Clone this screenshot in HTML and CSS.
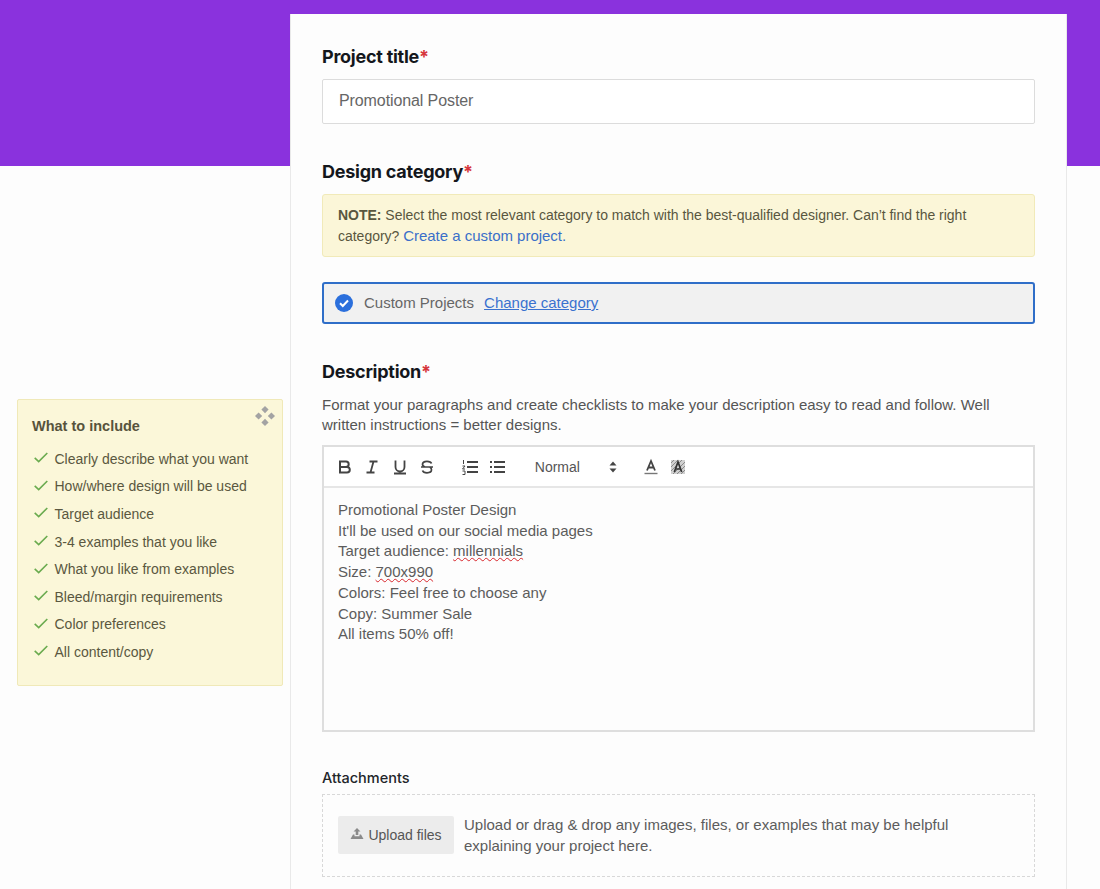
FILE: index.html
```html
<!DOCTYPE html>
<html lang="en">
<head>
<meta charset="utf-8">
<title>Project brief</title>
<link rel="stylesheet" href="styles.css">
</head>
<body>
<div class="page">
  <aside class="tips">
    <svg class="move" width="22" height="22" viewBox="0 0 22 22"><g fill="#a3a3a3"><path d="M11 1l3.6 3.6L11 8.200 7.400 4.600z"/><path d="M11 13.800l3.600 3.600L11 21l-3.600-3.600z"/><path d="M1 11l3.600-3.600L8.200 11l-3.600 3.600z"/><path d="M13.800 11l3.600-3.600L21 11l-3.600 3.600z"/></g></svg>
    <h3 class="tips-title">What to include</h3>
    <ul class="tips-list">
      <li><svg class="tick" width="14" height="11" viewBox="0 0 14 11"><path d="M.7 5.800l4 3.800L13.300 1" fill="none" stroke="#6aab4f" stroke-width="1.600"/></svg>Clearly describe what you want</li>
      <li><svg class="tick" width="14" height="11" viewBox="0 0 14 11"><path d="M.7 5.800l4 3.800L13.300 1" fill="none" stroke="#6aab4f" stroke-width="1.600"/></svg>How/where design will be used</li>
      <li><svg class="tick" width="14" height="11" viewBox="0 0 14 11"><path d="M.7 5.800l4 3.800L13.300 1" fill="none" stroke="#6aab4f" stroke-width="1.600"/></svg>Target audience</li>
      <li><svg class="tick" width="14" height="11" viewBox="0 0 14 11"><path d="M.7 5.800l4 3.800L13.300 1" fill="none" stroke="#6aab4f" stroke-width="1.600"/></svg>3-4 examples that you like</li>
      <li><svg class="tick" width="14" height="11" viewBox="0 0 14 11"><path d="M.7 5.800l4 3.800L13.300 1" fill="none" stroke="#6aab4f" stroke-width="1.600"/></svg>What you like from examples</li>
      <li><svg class="tick" width="14" height="11" viewBox="0 0 14 11"><path d="M.7 5.800l4 3.800L13.300 1" fill="none" stroke="#6aab4f" stroke-width="1.600"/></svg>Bleed/margin requirements</li>
      <li><svg class="tick" width="14" height="11" viewBox="0 0 14 11"><path d="M.7 5.800l4 3.800L13.300 1" fill="none" stroke="#6aab4f" stroke-width="1.600"/></svg>Color preferences</li>
      <li><svg class="tick" width="14" height="11" viewBox="0 0 14 11"><path d="M.7 5.800l4 3.800L13.300 1" fill="none" stroke="#6aab4f" stroke-width="1.600"/></svg>All content/copy</li>
    </ul>
  </aside>
  <main class="card">
    <h2 class="heading first">Project title<span class="req">*</span></h2>
    <div class="input">Promotional Poster</div>

    <h2 class="heading cat">Design category<span class="req">*</span></h2>
    <div class="note"><b>NOTE:</b> Select the most relevant category to match with the best-qualified designer. Can’t find the right category? <a class="plain" href="#">Create a custom project.</a></div>
    <div class="selected">
      <svg class="badge" width="18" height="18" viewBox="0 0 18 18"><circle cx="9" cy="9" r="9" fill="#2b6fdc"/><path d="M5 9.200l2.800 2.800L13 6.500" fill="none" stroke="#fff" stroke-width="2"/></svg>
      <span>Custom Projects</span>
      <a class="change" href="#">Change category</a>
    </div>

    <h2 class="heading desc">Description<span class="req">*</span></h2>
    <p class="help">Format your paragraphs and create checklists to make your description easy to read and follow. Well written instructions = better designs.</p>
    <div class="editor">
      <div class="toolbar">
        <svg class="tool" width="18" height="18" viewBox="0 0 18 18"><path d="M4 3.500h6a2.600 2.600 0 0 1 0 5.400H4zM4 8.900h7a2.800 2.800 0 0 1 0 5.600H4z" fill="none" stroke="#444" stroke-width="2"/></svg>
        <svg class="tool" width="18" height="18" viewBox="0 0 18 18"><path d="M6.500 3.500h8M3.500 14.500h8M10.500 3.500l-3 11" fill="none" stroke="#444" stroke-width="1.800"/></svg>
        <svg class="tool" width="18" height="18" viewBox="0 0 18 18"><path d="M4.500 2.500v6.500a4.500 4.500 0 0 0 9 0V2.500M3 15.500h12" fill="none" stroke="#444" stroke-width="1.800"/></svg>
        <svg class="tool" width="18" height="18" viewBox="0 0 18 18"><path d="M13.500 5.500C13 4 11.500 3.300 9 3.300c-3 0-4.500 1.400-4.500 3 0 1.300 1 2.200 2.500 2.700M4.500 12.500c.5 1.500 2 2.300 4.500 2.300 3 0 4.500-1.300 4.500-3 0-1.200-.6-2-1.500-2.800M3 9h12" fill="none" stroke="#444" stroke-width="1.700"/></svg>
        <svg class="tool list-first" width="18" height="18" viewBox="0 0 18 18"><path d="M6 4h11M6 9h11M6 14h11" stroke="#444" stroke-width="1.800"/><path d="M2.500 2v4M1.500 8h2.500l-2.500 3h2.500M1.500 13h2.500v3.500H1.500" fill="none" stroke="#444" stroke-width="1"/></svg>
        <svg class="tool" width="18" height="18" viewBox="0 0 18 18"><path d="M6 4h11M6 9h11M6 14h11" stroke="#444" stroke-width="1.800"/><path d="M2 4h2M2 9h2M2 14h2" stroke="#444" stroke-width="1.800"/></svg>
        <span class="picker">Normal<svg width="8" height="12" viewBox="0 0 8 12"><path d="M4 .5l3.500 4H.5zM4 11.500l3.500-4H.5z" fill="#444"/></svg></span>
        <svg class="tool" width="18" height="18" viewBox="0 0 18 18"><path d="M5 12.500L9 3l4 9.500M6.300 9.500h5.400" fill="none" stroke="#444" stroke-width="1.800"/><path d="M2.500 15.500h13" stroke="#777" stroke-width="1.400"/></svg>
        <svg class="tool" width="18" height="18" viewBox="0 0 18 18"><rect x="2" y="2" width="14" height="14" fill="#d0d0d0"/><path d="M2 5l3-3M2 9l7-7M2 13l11-11M4 16l12-12M8 16l8-8M12 16l4-4" stroke="#8a8a8a" stroke-width="1"/><path d="M5.300 14L9 4l3.700 10M6.500 11h5" fill="none" stroke="#333" stroke-width="1.700"/></svg>
      </div>
      <div class="editor-body">
        <div>Promotional Poster Design</div>
        <div>It'll be used on our social media pages</div>
        <div>Target audience: <span class="typo">millennials</span></div>
        <div>Size: <span class="typo">700x990</span></div>
        <div>Colors: Feel free to choose any</div>
        <div>Copy: Summer Sale</div>
        <div>All items 50% off!</div>
      </div>
    </div>

    <h4 class="attach-label">Attachments</h4>
    <div class="dropzone">
      <button class="upload" type="button"><svg width="14" height="13" viewBox="0 0 14 13"><path d="M7 0l3.500 3.500H8.300V7H5.700V3.500H3.500z" fill="#8a8a8a"/><path d="M3 6.500h1.500v1.700h5V6.500H11l2.500 4.500H.5z" fill="#8a8a8a"/></svg>Upload files</button>
      <p class="drop-text">Upload or drag &amp; drop any images, files, or examples that may be helpful explaining your project here.</p>
    </div>
  </main>
</div>
</body>
</html>
```

FILE: styles.css
```css
* { box-sizing: border-box; }
html, body { margin: 0; height: 100%; }
body {
  background: linear-gradient(#8a32dd 0, #8a32dd 166px, #fdfdfd 166px);
  font-family: "Liberation Sans", Arial, sans-serif;
  color: #555;
  overflow: hidden;
}
.page {
  display: flex;
  align-items: flex-start;
  padding: 14px 0 0 17px;
}
.tips {
  position: relative;
  flex: none;
  width: 266px;
  height: 287px;
  margin: 385px 7px 0 0;
  padding: 17px 14px;
  background: #fbf7d9;
  border: 1px solid #f0e9b8;
  border-radius: 2px;
  color: #5a5740;
}
.move { position: absolute; top: 5px; right: 6px; }
.tips-title {
  margin: 0 0 10px;
  font-size: 14.500px;
  font-weight: 700;
  line-height: 18px;
  color: #57533c;
}
.tips-list { margin: 0; padding: 0; list-style: none; }
.tips-list li {
  display: flex;
  align-items: center;
  height: 27.600px;
  font-size: 14px;
}
.tick { flex: none; margin: -2px 6.500px 0 2px; }
.card {
  flex: none;
  width: 777px;
  min-height: 880px;
  padding: 0 31px;
  background: #fdfdfd;
  border: solid #e9e9e9;
  border-width: 0 1px;
}
.heading {
  margin: 0;
  font-family: Inter, "Liberation Sans", sans-serif;
  font-size: 18px;
  font-weight: 700;
  line-height: 24px;
  letter-spacing: -.25px;
  color: #14171c;
}
.first { padding-top: 31px; }
.cat { margin-top: 36px; }
.desc { margin-top: 36px; }
.req { color: #d6353b; }
.input {
  height: 45px;
  margin-top: 10px;
  padding: 0 16px;
  background: #fff;
  border: 1px solid #dcdcdc;
  border-radius: 2px;
  font-size: 16px;
  letter-spacing: -.1px;
  line-height: 42px;
  color: #666;
}
.note {
  height: 63px;
  margin-top: 10px;
  padding: 10px 15px;
  background: #fbf6d8;
  border: 1px solid #f1eab9;
  border-radius: 3px;
  font-size: 14px;
  letter-spacing: -.02px;
  line-height: 21px;
  color: #59563f;
}
.plain { color: #3a6fc9; font-size: 15px; line-height: 1; text-decoration: none; }
.selected {
  display: flex;
  align-items: center;
  height: 42px;
  margin-top: 25px;
  padding: 0 11px 1px;
  background: #f1f1f1;
  border: 2px solid #2f6ec8;
  border-radius: 3px;
  font-size: 15px;
  color: #666;
}
.badge { flex: none; margin-right: 11px; }
.change { margin-left: 10px; color: #3a72cf; }
.help {
  margin: 11px 0 0;
  font-size: 15px;
  line-height: 20px;
  color: #555;
}
.editor {
  margin-top: 10px;
  border: 2px solid #dedede;
}
.toolbar {
  display: flex;
  align-items: center;
  height: 41px;
  padding-left: 12px;
  background: #fff;
  border-bottom: 2px solid #e6e6e6;
}
.tool { flex: none; margin-right: 9.300px; }
.list-first { margin-left: 16px; }
.picker {
  display: flex;
  align-items: center;
  justify-content: space-between;
  width: 82px;
  margin: 0 25px 0 19px;
  font-size: 14px;
  color: #555;
}
.editor-body {
  height: 242px;
  padding: 12px 14px;
  background: #fdfdfd;
  font-size: 15px;
  line-height: 20.700px;
  color: #5c5c5c;
}
.typo {
  text-decoration: underline wavy #d8262c 1px;
  text-underline-offset: 1px;
}
.attach-label {
  margin: 37px 0 7px;
  font-family: Inter, "Liberation Sans", sans-serif;
  font-size: 14.500px;
  font-weight: 500;
  line-height: 18px;
  color: #22252a;
}
.dropzone {
  display: flex;
  align-items: center;
  gap: 10px;
  height: 83px;
  padding: 0 40px 2px 15px;
  border: 1px dashed #d8d8d8;
}
.upload {
  display: flex;
  flex: none;
  align-items: center;
  justify-content: center;
  gap: 4px;
  width: 116px;
  height: 38px;
  padding: 0;
  background: #ececec;
  border: 0;
  border-radius: 2px;
  font-family: "Liberation Sans", Arial, sans-serif;
  font-size: 14px;
  color: #555;
}
.drop-text {
  margin: 0;
  font-size: 15px;
  line-height: 21px;
  color: #5c5c5c;
}
```
